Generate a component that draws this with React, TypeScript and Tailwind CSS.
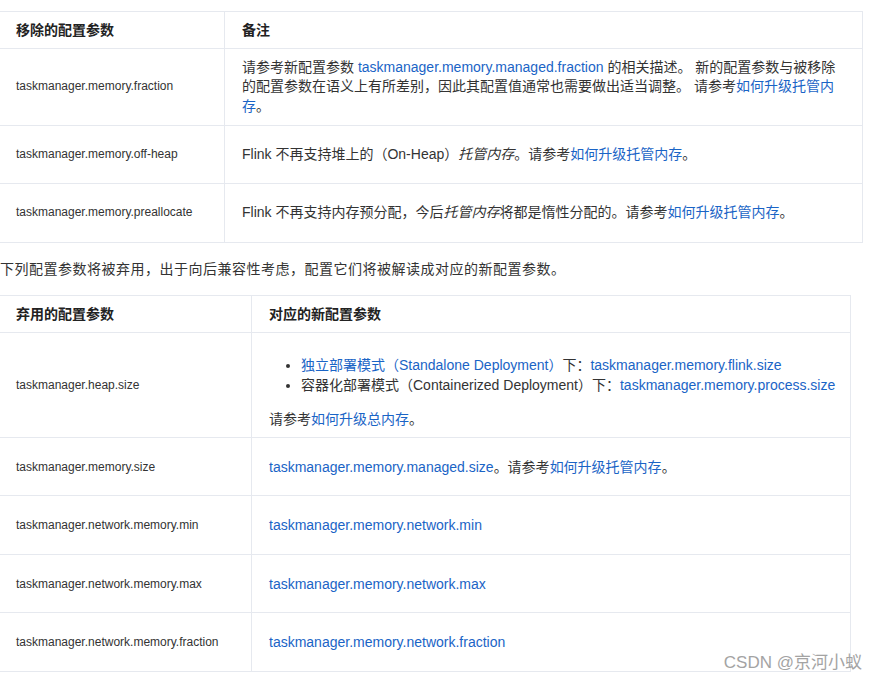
import React from "react";

const A = ({ children }: { children: React.ReactNode }) => (
  <a className="text-[#1a64c6]">{children}</a>
);

const td = "border border-[#e6e9ef] align-middle";

export default function App() {
  return (
    <div className="relative h-[680px] w-[874px] overflow-hidden bg-white font-['Liberation_Sans','Noto_Sans_CJK_SC',sans-serif] text-[#333]">
      <div className="-ml-px pt-[11px]">
        {/* 移除的配置参数 */}
        <table className="w-[864px] table-fixed border-collapse">
          <colgroup>
            <col className="w-[225px]" />
            <col />
          </colgroup>
          <thead>
            <tr className="h-[37px]">
              <th className={`${td} pl-[16px] text-left text-[14px] font-bold text-[#222]`}>移除的配置参数</th>
              <th className={`${td} pl-[17px] text-left text-[14px] font-bold text-[#222]`}>备注</th>
            </tr>
          </thead>
          <tbody className="text-[14px] leading-[19.5px]">
            <tr className="h-[77px]">
              <td className={`${td} pl-[16px] text-[12px]`}>taskmanager.memory.fraction</td>
              <td className={`${td} whitespace-nowrap pl-[17px]`}>
                请参考新配置参数 <A>taskmanager.memory.managed.fraction</A> 的相关描述。 新的配置参数与被移除
                <br />
                的配置参数在语义上有所差别，因此其配置值通常也需要做出适当调整。 请参考<A>如何升级托管内</A>
                <br />
                <A>存</A>。
              </td>
            </tr>
            <tr className="h-[58px]">
              <td className={`${td} pl-[16px] text-[12px]`}>taskmanager.memory.off-heap</td>
              <td className={`${td} pl-[17px]`}>
                Flink 不再支持堆上的（On-Heap）<i>托管内存</i>。请参考<A>如何升级托管内存</A>。
              </td>
            </tr>
            <tr className="h-[59px]">
              <td className={`${td} pl-[16px] text-[12px]`}>taskmanager.memory.preallocate</td>
              <td className={`${td} pl-[17px]`}>
                Flink 不再支持内存预分配，今后<i>托管内存</i>将都是惰性分配的。请参考<A>如何升级托管内存</A>。
              </td>
            </tr>
          </tbody>
        </table>
      </div>

      <p className="mt-[16px] text-[14px] leading-[20px] tracking-[0.5px]">
        下列配置参数将被弃用，出于向后兼容性考虑，配置它们将被解读成对应的新配置参数。
      </p>

      <div className="-ml-px mt-[16px]">
        {/* 弃用的配置参数 */}
        <table className="w-[852px] table-fixed border-collapse">
          <colgroup>
            <col className="w-[252px]" />
            <col />
          </colgroup>
          <thead>
            <tr className="h-[37px]">
              <th className={`${td} pl-[16px] text-left text-[14px] font-bold text-[#222]`}>弃用的配置参数</th>
              <th className={`${td} pl-[17px] text-left text-[14px] font-bold text-[#222]`}>对应的新配置参数</th>
            </tr>
          </thead>
          <tbody className="text-[14px] leading-[20px]">
            <tr className="h-[105px]">
              <td className={`${td} pl-[16px] text-[12px]`}>taskmanager.heap.size</td>
              <td className={`${td} whitespace-nowrap pb-[7px] pl-[17px] pt-[22px] align-top`}>
                <ul className="list-disc pl-[32px]">
                  <li>
                    <A>独立部署模式（Standalone Deployment）</A>下：<A>taskmanager.memory.flink.size</A>
                  </li>
                  <li>
                    容器化部署模式（Containerized Deployment）下：<A>taskmanager.memory.process.size</A>
                  </li>
                </ul>
                <p className="mt-[14px]">
                  请参考<A>如何升级总内存</A>。
                </p>
              </td>
            </tr>
            <tr className="h-[58px]">
              <td className={`${td} pl-[16px] text-[12px]`}>taskmanager.memory.size</td>
              <td className={`${td} pl-[17px]`}>
                <A>taskmanager.memory.managed.size</A>。请参考<A>如何升级托管内存</A>。
              </td>
            </tr>
            <tr className="h-[59px]">
              <td className={`${td} pl-[16px] text-[12px]`}>taskmanager.network.memory.min</td>
              <td className={`${td} pl-[17px]`}>
                <A>taskmanager.memory.network.min</A>
              </td>
            </tr>
            <tr className="h-[58px]">
              <td className={`${td} pl-[16px] text-[12px]`}>taskmanager.network.memory.max</td>
              <td className={`${td} pl-[17px]`}>
                <A>taskmanager.memory.network.max</A>
              </td>
            </tr>
            <tr className="h-[59px]">
              <td className={`${td} pl-[16px] text-[12px]`}>taskmanager.network.memory.fraction</td>
              <td className={`${td} pl-[17px]`}>
                <A>taskmanager.memory.network.fraction</A>
              </td>
            </tr>
          </tbody>
        </table>
      </div>

      {/* 水印 */}
      <div className="absolute bottom-[7px] right-[12px] text-[17px] leading-[20px] text-[#9a9a9a] opacity-90">
        CSDN @京河小蚁
      </div>
    </div>
  );
}
